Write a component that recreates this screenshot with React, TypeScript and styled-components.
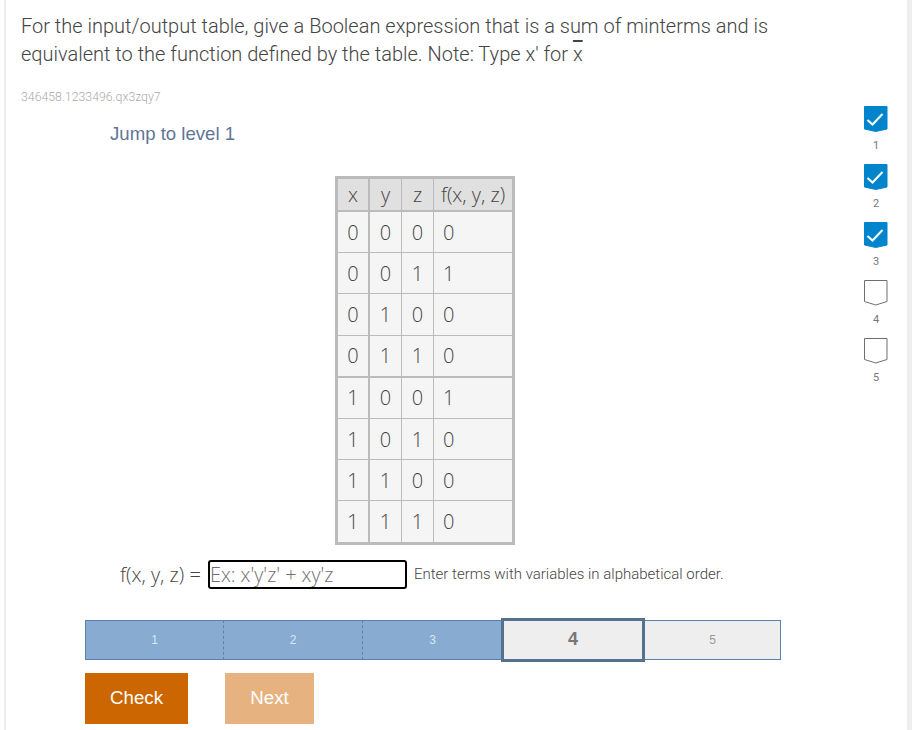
import React from 'react';
import styled, { createGlobalStyle } from 'styled-components';

const GlobalStyle = createGlobalStyle`
  html, body {
    margin: 0;
    padding: 0;
    height: 730px;
    overflow: hidden;
    background: #fff;
  }
`;

const ROWS = [
  [0, 0, 0, 0],
  [0, 0, 1, 1],
  [0, 1, 0, 0],
  [0, 1, 1, 0],
  [1, 0, 0, 1],
  [1, 0, 1, 0],
  [1, 1, 0, 0],
  [1, 1, 1, 0],
];

const LEVELS = [1, 2, 3, 4, 5];
const CURRENT_LEVEL = 4;

const Flag: React.FC<{ done: boolean }> = ({ done }) => (
  <svg width="24" height="26" viewBox="0 0 24 26">
    <path
      d={done ? 'M0.5 0.5H23V23L11.75 25.5L0.5 23Z' : 'M0.5 0.5H23V21.5L11.75 25L0.5 21.5Z'}
      fill={done ? '#0085cc' : '#fff'}
      stroke={done ? '#0085cc' : '#6e6e6e'}
    />
    {done && <path d="M3.5 14L8.5 18.5L18.5 8" fill="none" stroke="#fff" strokeWidth="2" />}
  </svg>
);

export default function App() {
  return (
    <Page>
      <GlobalStyle />
      <Card>
        <Question>
          For the input/output table, give a Boolean expression that is a sum of minterms and is
          <br />
          equivalent to the function defined by the table. Note: Type x' for <Over>x</Over>
        </Question>
        <Code>346458.1233496.qx3zqy7</Code>
        <Body>
          <Main>
            <JumpLabel>Jump to level 1</JumpLabel>
            <TableWrap>
              <TruthTable>
                <thead>
                  <tr>
                    <HeadCell>x</HeadCell>
                    <HeadCell>y</HeadCell>
                    <HeadCell>z</HeadCell>
                    <HeadCell>f(x, y, z)</HeadCell>
                  </tr>
                </thead>
                <tbody>
                  {ROWS.map((row, i) => (
                    <BodyRow key={`row-${i}`}>
                      {row.map((value, j) => (
                        <Cell key={`cell-${i}-${j}`} $last={j === 3}>
                          {value}
                        </Cell>
                      ))}
                    </BodyRow>
                  ))}
                </tbody>
              </TruthTable>
            </TableWrap>
            <AnswerRow>
              <AnswerLabel>f(x, y, z) =</AnswerLabel>
              <AnswerInput placeholder="Ex: x'y'z' + xy'z" />
              <AnswerHint>Enter terms with variables in alphabetical order.</AnswerHint>
            </AnswerRow>
            <ProgressBar>
              {LEVELS.map((level) => (
                <Segment
                  key={level}
                  $done={level < CURRENT_LEVEL}
                  $current={level === CURRENT_LEVEL}
                  $divider={level < 3}
                >
                  {level}
                </Segment>
              ))}
            </ProgressBar>
            <Actions>
              <CheckButton>Check</CheckButton>
              <NextButton>Next</NextButton>
            </Actions>
          </Main>
          <Sidebar>
            {LEVELS.map((level) => (
              <FlagItem key={level}>
                <Flag done={level < CURRENT_LEVEL} />
                <FlagNumber>{level}</FlagNumber>
              </FlagItem>
            ))}
          </Sidebar>
        </Body>
      </Card>
    </Page>
  );
}

const Page = styled.div`
  width: 924px;
  height: 730px;
  overflow: hidden;
  box-sizing: border-box;
  padding: 0 12px 0 4px;
`;

const Card = styled.div`
  height: 730px;
  box-sizing: border-box;
  padding: 12px 0 0 15px;
  border-left: 2px solid #eeeeee;
  border-right: 5px solid #eeeeee;
  font-family: Roboto, 'Liberation Sans', sans-serif;
`;

const Question = styled.div`
  font-size: 20px;
  font-weight: 300;
  line-height: 28px;
  color: #444444;
`;

const Over = styled.span`
  text-decoration: overline;
`;

const Code = styled.div`
  margin-top: 22px;
  font-size: 12.3px;
  font-weight: 300;
  line-height: 14px;
  color: #aaaaaa;
`;

const Body = styled.div`
  display: flex;
`;

const Main = styled.div`
  width: 760px;
  padding-left: 64px;
  box-sizing: content-box;
`;

const JumpLabel = styled.div`
  margin: 18px 0 0 25px;
  font-family: 'Liberation Sans', Arial, sans-serif;
  font-size: 18.6px;
  line-height: 24px;
  color: #5f7596;
`;

const TableWrap = styled.div`
  margin: 30px 0 0 250px;
`;

const TruthTable = styled.table`
  border-collapse: collapse;
  border: 3px solid #bbbbbb;
  font-family: 'Open Sans', sans-serif;
  font-size: 20px;
  font-weight: 300;
  color: #444444;
  table-layout: fixed;
  width: 180px;
`;

const HeadCell = styled.th`
  height: 31px;
  padding: 0;
  font-weight: 300;
  background: #e0e0e0;
  border: 1px solid #bbbbbb;
  border-bottom-width: 2px;
  width: 31px;

  &:first-child {
    width: 30px;
    border-right-width: 2px;
  }

  &:last-child {
    width: auto;
  }
`;

const BodyRow = styled.tr`
  &:nth-child(4) td {
    border-bottom-width: 2px;
  }
`;

const Cell = styled.td<{ $last: boolean }>`
  height: 40.2px;
  padding: ${({ $last }) => ($last ? '0 0 0 9px' : '0')};
  text-align: ${({ $last }) => ($last ? 'left' : 'center')};
  background: #f5f5f5;
  border: 1px solid #bbbbbb;

  &:first-child {
    border-right-width: 2px;
  }
`;

const AnswerRow = styled.div`
  display: flex;
  align-items: center;
  margin: 15px 0 0 35px;
  height: 30px;
`;

const AnswerLabel = styled.span`
  font-family: 'Open Sans', sans-serif;
  font-size: 20px;
  font-weight: 300;
  color: #444444;
  width: 88px;
  white-space: nowrap;
`;

const AnswerInput = styled.input`
  width: 199px;
  height: 29px;
  box-sizing: border-box;
  padding: 0;
  border: 2px solid #000000;
  border-radius: 3px;
  outline: none;
  font-family: 'Open Sans', sans-serif;
  font-size: 19.8px;
  font-weight: 300;

  &::placeholder {
    color: #6e6e6e;
    opacity: 1;
  }
`;

const AnswerHint = styled.span`
  margin-left: 7px;
  padding-bottom: 2px;
  font-size: 15px;
  font-weight: 300;
  color: #444444;
  white-space: nowrap;
`;

const ProgressBar = styled.div`
  display: flex;
  align-items: center;
  width: 696px;
  height: 40px;
  margin-top: 30px;
  font-family: 'Liberation Sans', Arial, sans-serif;
`;

const Segment = styled.div<{ $done: boolean; $current: boolean; $divider: boolean }>`
  box-sizing: border-box;
  display: flex;
  align-items: center;
  justify-content: center;
  width: ${({ $current }) => ($current ? '144px' : '139px')};
  height: ${({ $current }) => ($current ? '44px' : '40px')};
  margin-left: ${({ $current }) => ($current ? '-1px' : '0')};
  flex: 0 0 auto;
  font-size: ${({ $current }) => ($current ? '18px' : '12px')};
  font-weight: ${({ $current }) => ($current ? 700 : 400)};
  color: ${({ $done, $current }) => ($done ? '#dbe6f2' : $current ? '#777777' : '#999999')};
  background: ${({ $done }) => ($done ? '#87abd1' : '#eeeeee')};
  border: ${({ $current }) => ($current ? '3px solid #56708f' : '1px solid #5b82aa')};
  border-left-width: ${({ $done, $current }) => ($done ? '0' : $current ? '3px' : '1px')};
  border-right: ${({ $divider, $current }) =>
    $divider ? '1px dashed #5b82aa' : $current ? '3px solid #56708f' : '0'};

  &:first-child {
    border-left-width: 1px;
  }

  &:last-child {
    width: 136px;
    border-left: none;
    border-right: 1px solid #5b82aa;
  }
`;

const Actions = styled.div`
  display: flex;
  gap: 37px;
  margin-top: 13px;
`;

const ActionButton = styled.button`
  height: 51px;
  padding: 0;
  border: none;
  font-family: 'Liberation Sans', Arial, sans-serif;
  font-size: 18.7px;
  font-weight: 400;
  color: #ffffff;
`;

const CheckButton = styled(ActionButton)`
  width: 103px;
  background: #cc6600;
`;

const NextButton = styled(ActionButton)`
  width: 89px;
  background: #e6b380;
`;

const Sidebar = styled.div`
  display: flex;
  flex-direction: column;
  gap: 9px;
  margin: 2px 0 0 19px;
  width: 24px;
`;

const FlagItem = styled.div`
  display: flex;
  flex-direction: column;
  align-items: center;
  height: 49px;
  line-height: 0;
`;

const FlagNumber = styled.span`
  margin-top: 7px;
  font-size: 11px;
  line-height: 14px;
  color: #777777;
`;
